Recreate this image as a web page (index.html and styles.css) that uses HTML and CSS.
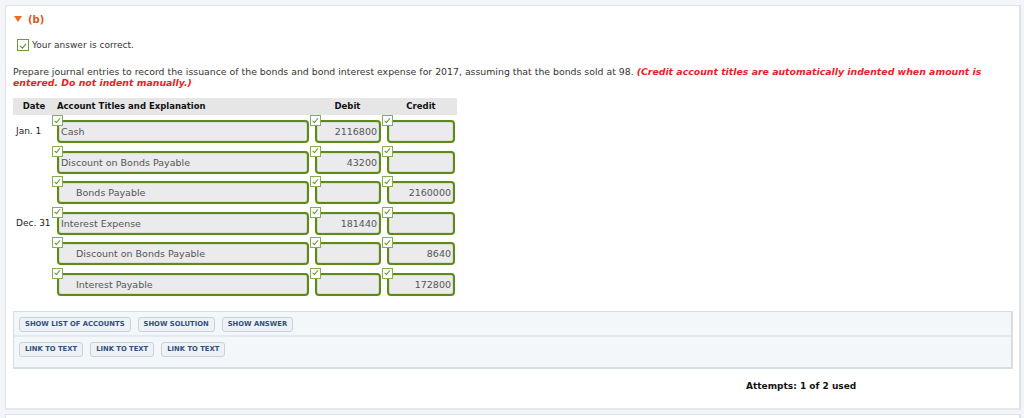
FILE: index.html
```html
<!DOCTYPE html>
<html lang="en">
<head>
    <meta charset="UTF-8">
    <title>Journal entries (b)</title>
    <link rel="stylesheet" href="styles.css">
</head>
<body>
    <div class="panel">
        <div class="part-title"><span class="arrow"></span>(b)</div>

        <div class="correct"><span class="box-check"></span>Your answer is correct.</div>

        <p class="question">Prepare journal entries to record the issuance of the bonds and bond interest expense for 2017, assuming that the bonds sold at 98. <em class="note">(Credit account titles are automatically indented when amount is entered. Do not indent manually.)</em></p>

        <div class="journal">
            <div class="head h-date">Date</div>
            <div class="head h-title">Account Titles and Explanation</div>
            <div class="head h-num">Debit</div>
            <div class="head h-num">Credit</div>

            <div class="date">Jan. 1</div>
            <div class="cell"><span class="chk"></span><div class="field acct">Cash</div></div>
            <div class="cell"><span class="chk"></span><div class="field amt dr">2116800</div></div>
            <div class="cell"><span class="chk"></span><div class="field amt cr"></div></div>

            <div class="date"></div>
            <div class="cell"><span class="chk"></span><div class="field acct">Discount on Bonds Payable</div></div>
            <div class="cell"><span class="chk"></span><div class="field amt dr">43200</div></div>
            <div class="cell"><span class="chk"></span><div class="field amt cr"></div></div>

            <div class="date"></div>
            <div class="cell"><span class="chk"></span><div class="field acct indent">Bonds Payable</div></div>
            <div class="cell"><span class="chk"></span><div class="field amt dr"></div></div>
            <div class="cell"><span class="chk"></span><div class="field amt cr">2160000</div></div>

            <div class="date">Dec. 31</div>
            <div class="cell"><span class="chk"></span><div class="field acct">Interest Expense</div></div>
            <div class="cell"><span class="chk"></span><div class="field amt dr">181440</div></div>
            <div class="cell"><span class="chk"></span><div class="field amt cr"></div></div>

            <div class="date"></div>
            <div class="cell"><span class="chk"></span><div class="field acct indent">Discount on Bonds Payable</div></div>
            <div class="cell"><span class="chk"></span><div class="field amt dr"></div></div>
            <div class="cell"><span class="chk"></span><div class="field amt cr">8640</div></div>

            <div class="date"></div>
            <div class="cell"><span class="chk"></span><div class="field acct indent">Interest Payable</div></div>
            <div class="cell"><span class="chk"></span><div class="field amt dr"></div></div>
            <div class="cell"><span class="chk"></span><div class="field amt cr">172800</div></div>
        </div>

        <div class="tools">
            <div class="tool-row">
                <button class="btn">Show List of Accounts</button>
                <button class="btn">Show Solution</button>
                <button class="btn">Show Answer</button>
            </div>
            <div class="tool-row last">
                <button class="btn">Link to Text</button>
                <button class="btn">Link to Text</button>
                <button class="btn">Link to Text</button>
            </div>
        </div>

        <div class="attempts">Attempts: 1 of 2 used</div>
    </div>
    <div class="panel next"></div>
</body>
</html>
```

FILE: styles.css
```css
body { margin: 0; padding: 5px 3px 0 5px; background: #f3f6f9; font-family: "DejaVu Sans", Verdana, sans-serif; font-size: 9px; color: #333; overflow: hidden; }

.panel { background: #fff; border: 1px solid #dde3ea; border-right: 2px solid #dde2e8; border-bottom: 2px solid #e4e8ee; padding: 7px 8px 0 7px; height: 405px; box-sizing: border-box; }
.panel.next { height: 20px; margin-top: 4px; padding: 0; }

.part-title { display: flex; align-items: center; height: 12px; font-size: 10px; font-weight: bold; color: #e0561b; padding-left: 1px; }
.arrow { width: 0; height: 0; border-left: 4.5px solid transparent; border-right: 4.5px solid transparent; border-top: 6px solid #f26a1f; margin-right: 6px; }

.correct { display: flex; align-items: center; margin-top: 14px; margin-left: 4px; height: 12px; }
.box-check { position: relative; width: 10px; height: 10px; border: 1px solid #6f9b35; background: #fff; margin-right: 3px; }
.box-check::after { content: ""; position: absolute; left: 3px; top: 1.5px; width: 2.5px; height: 5px; border: solid #4f8a1b; border-width: 0 1.5px 1.5px 0; transform: rotate(40deg); }

.question { margin: 15px 0 0 0; line-height: 11px; font-size: 9.35px; color: #333; }
.note { font-weight: bold; color: #ee1c25; }

.journal { display: grid; grid-template-columns: 39px 258px 72px 75px; grid-template-rows: 17px; grid-auto-rows: 30.6px; width: 444px; margin-top: 10px; }
.head { background: #e6e6e6; line-height: 17px; font-weight: bold; font-size: 8.5px; color: #111; }
.h-date { text-align: center; padding-left: 3px; }
.h-title { padding-left: 5px; }
.h-num { text-align: center; padding-left: 5px; padding-right: 2px; }

.date { padding: 11px 0 0 3px; color: #222; white-space: nowrap; }

.cell { position: relative; padding: 5px 0 0 5px; }
.chk { position: absolute; left: 0; top: 0; width: 9px; height: 9px; border: 1px solid #86ad4e; background: #fff; }
.chk::after { content: ""; position: absolute; left: 2.5px; top: 0.5px; width: 2px; height: 4.5px; border: solid #5b9322; border-width: 0 1.3px 1.3px 0; transform: rotate(40deg); }

.field { height: 23px; box-sizing: border-box; border: 2px solid #5c8c14; border-radius: 4px; background: #ebebed; line-height: 19px; font-size: 9.5px; color: #555; padding: 0 2px 0 2px; box-shadow: inset 0 0 0 1px #dcdcdc; white-space: nowrap; }
.field.acct { width: 252px; }
.field.indent { padding-left: 17px; }
.field.amt { text-align: right; }
.field.dr { width: 66px; }
.field.cr { width: 68px; }

.tools { margin-top: 12px; background: #f4f7fa; border: 1px solid #d7dde5; border-right-width: 2px; border-bottom-width: 2px; width: 1000px; box-sizing: border-box; }
.tool-row { display: flex; gap: 7px; padding: 5px 5px 3px 5px; border-bottom: 2px solid #e6eaef; height: 25px; box-sizing: border-box; }
.tool-row.last { border-bottom: 0; height: 30px; padding-top: 5px; }

.btn { font-family: "DejaVu Sans", Verdana, sans-serif; font-size: 6.8px; font-weight: bold; text-transform: uppercase; color: #2f4f7f; background: #eef2f6; border: 1px solid #c8d2dd; border-radius: 3px; height: 15px; padding: 0 5px; line-height: 13px; }

.attempts { margin: 12px 0 0 733px; font-weight: bold; font-size: 9px; color: #111; }
```
